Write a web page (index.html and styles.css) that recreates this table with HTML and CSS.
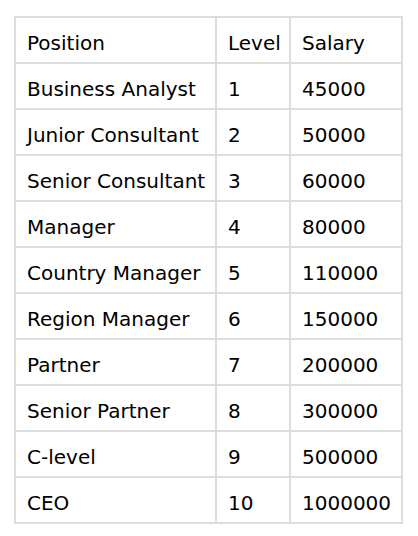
FILE: index.html
```html
<!DOCTYPE html>
<html>
<head>
<meta charset="utf-8">
<link rel="stylesheet" href="styles.css">
</head>
<body>
<table class="salary-table">
  <colgroup>
    <col class="col-position">
    <col class="col-level">
    <col class="col-salary">
  </colgroup>
  <thead>
    <tr><th>Position</th><th>Level</th><th>Salary</th></tr>
  </thead>
  <tbody>
    <tr><td>Business Analyst</td><td>1</td><td>45000</td></tr>
    <tr><td>Junior Consultant</td><td>2</td><td>50000</td></tr>
    <tr><td>Senior Consultant</td><td>3</td><td>60000</td></tr>
    <tr><td>Manager</td><td>4</td><td>80000</td></tr>
    <tr><td>Country Manager</td><td>5</td><td>110000</td></tr>
    <tr><td>Region Manager</td><td>6</td><td>150000</td></tr>
    <tr><td>Partner</td><td>7</td><td>200000</td></tr>
    <tr><td>Senior Partner</td><td>8</td><td>300000</td></tr>
    <tr><td>C-level</td><td>9</td><td>500000</td></tr>
    <tr><td>CEO</td><td>10</td><td>1000000</td></tr>
  </tbody>
</table>
</body>
</html>
```
FILE: styles.css
```css
html, body {
  margin: 0;
  background: #fff;
}
body {
  padding: 16px 0 0 14px;
  font-family: "DejaVu Sans", Verdana, sans-serif;
  font-size: 20px;
  color: #000;
}
.salary-table {
  border-collapse: collapse;
  table-layout: fixed;
  width: 387px;
}
.col-position { width: 201px; }
.col-level { width: 74px; }
.col-salary { width: 112px; }
.salary-table th,
.salary-table td {
  border: 2px solid #ddd;
  height: 46px;
  box-sizing: border-box;
  padding: 6px 0 0 11px;
  text-align: left;
  font-weight: normal;
  white-space: nowrap;
  vertical-align: middle;
}
```
